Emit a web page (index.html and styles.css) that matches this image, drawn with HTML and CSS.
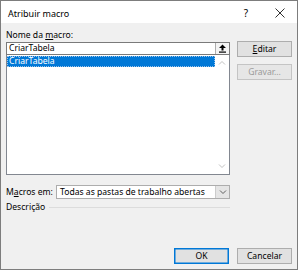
FILE: index.html
```html
<!DOCTYPE html>
<html lang="pt">
<head>
<meta charset="utf-8">
<title>Atribuir macro</title>
<link rel="stylesheet" href="styles.css">
</head>
<body>
<div class="dialog">
  <div class="titlebar">
    <span class="title">Atribuir macro</span>
    <span class="help">?</span>
    <svg class="close" width="10" height="10" viewBox="0 0 10 10"><path d="M0.5 0.5 L9.5 9.5 M9.5 0.5 L0.5 9.5" stroke="#1a1a1a" stroke-width="0.9" fill="none"/></svg>
  </div>
  <div class="content">
    <div class="main">
      <div class="leftcol">
        <div class="label">Nome da <u>m</u>acro:</div>
        <div class="namebox">
          <span class="nametext">CriarTabela</span>
          <span class="refbtn"><svg width="9" height="9" viewBox="0 0 9 9"><path d="M4.5 0.5 L8 4 L5.5 4 L5.5 6.5 L3.5 6.5 L3.5 4 L1 4 Z" fill="#000"/><rect x="1" y="7.5" width="7" height="1.2" fill="#000"/></svg></span>
        </div>
        <div class="listbox">
          <div class="items">
            <div class="item selected">CriarTabela</div>
          </div>
          <div class="scrollbar">
            <svg width="8" height="6" viewBox="0 0 8 6"><path d="M1 4.5 L4 1.5 L7 4.5" stroke="#c2c2c2" stroke-width="1" fill="none"/></svg>
            <svg width="8" height="6" viewBox="0 0 8 6"><path d="M1 1.5 L4 4.5 L7 1.5" stroke="#c2c2c2" stroke-width="1" fill="none"/></svg>
          </div>
        </div>
      </div>
      <div class="rightcol">
        <div class="btn"><u>E</u>ditar</div>
        <div class="btn disabled">Gravar...</div>
      </div>
    </div>
    <div class="macrosrow">
      <span class="label">M<u>a</u>cros em:</span>
      <div class="combo">
        <span class="combotext">Todas as pastas de trabalho abertas</span>
        <span class="dropbtn"><svg width="8" height="6" viewBox="0 0 8 6"><path d="M1 1.5 L4 4.5 L7 1.5" stroke="#606060" stroke-width="1" fill="none"/></svg></span>
      </div>
    </div>
    <div class="descrow">
      <span class="label">Descrição</span>
      <span class="sep"></span>
    </div>
    <div class="footer">
      <div class="btn default">OK</div>
      <div class="btn">Cancelar</div>
    </div>
  </div>
</div>
</body>
</html>
```
FILE: styles.css
```css
html, body {
  margin: 0;
  padding: 0;
  background: #ffffff;
}
body {
  width: 300px;
  height: 272px;
  font-family: "Noto Sans", "DejaVu Sans", sans-serif;
  font-size: 8.6px;
  color: #000;
}
.dialog {
  width: 296px;
  height: 268px;
  border: 1px solid #7d7d7d;
  background: #f0f0f0;
  display: flex;
  flex-direction: column;
}
.titlebar {
  height: 22px;
  background: #ffffff;
  display: flex;
  align-items: center;
  padding-left: 7px;
  box-sizing: border-box;
  flex: none;
}
.title {
  font-size: 9px;
  flex: 1;
  padding-top: 3px;
}
.help {
  font-size: 10px;
  margin-right: 27px;
  padding-top: 2px;
}
.close {
  margin-right: 12px;
  margin-top: 2px;
}
.content {
  flex: 1;
  display: flex;
  flex-direction: column;
  padding: 6px 5px 5px 5px;
}
.main {
  display: flex;
  gap: 7px;
}
.leftcol {
  width: 224px;
  display: flex;
  flex-direction: column;
}
.label {
  line-height: 13px;
  height: 13px;
}
u {
  text-decoration-thickness: 1px;
  text-underline-offset: 1px;
}
.namebox {
  height: 13px;
  box-sizing: border-box;
  border: 1px solid #7a7a7a;
  background: #fff;
  display: flex;
  align-items: center;
}
.nametext {
  flex: 1;
  padding-left: 2px;
  line-height: 11px;
}
.refbtn {
  width: 14px;
  height: 11px;
  box-sizing: border-box;
  border-left: 1px solid #adadad;
  background: #f4f4f4;
  display: flex;
  align-items: center;
  justify-content: center;
}
.listbox {
  height: 120px;
  box-sizing: border-box;
  border: 1px solid #828790;
  border-top: none;
  background: #fff;
  display: flex;
}
.items {
  flex: 1;
  padding-top: 1px;
}
.item {
  height: 11px;
  line-height: 11px;
  padding-left: 2px;
  box-sizing: border-box;
}
.item.selected {
  background: #0078d7;
  color: #fff;
  outline: 1px dotted #9ac3ea;
  outline-offset: -1px;
}
.scrollbar {
  width: 14px;
  display: flex;
  flex-direction: column;
  justify-content: space-between;
  align-items: center;
  padding: 5px 0 5px 0;
  background: #ffffff;
}
.rightcol {
  width: 55px;
  display: flex;
  flex-direction: column;
  gap: 7px;
  padding-top: 12px;
}
.btn {
  width: 55px;
  height: 16px;
  box-sizing: border-box;
  border: 1px solid #adadad;
  background: #e1e1e1;
  display: flex;
  align-items: center;
  justify-content: center;
  line-height: 14px;
}
.btn.disabled {
  color: #9a9a9a;
  border-color: #c4c4c4;
  background: #e6e6e6;
}
.btn.default {
  border: 1px solid #0078d7;
  box-shadow: inset 0 0 0 0.5px #0078d7;
}
.macrosrow {
  display: flex;
  align-items: center;
  margin-top: 10px;
}
.macrosrow .label {
  width: 50px;
}
.combo {
  width: 174px;
  height: 14px;
  box-sizing: border-box;
  border: 1px solid #adadad;
  background: #fff;
  display: flex;
  align-items: center;
}
.combotext {
  flex: 1;
  padding-left: 3px;
  line-height: 12px;
}
.dropbtn {
  width: 13px;
  height: 12px;
  background: #e5e5e5;
  border-left: 1px solid #cccccc;
  display: flex;
  align-items: center;
  justify-content: center;
}
.descrow {
  display: flex;
  align-items: center;
  width: 224px;
  margin-top: 2px;
  gap: 4px;
}
.sep {
  flex: 1;
  height: 1px;
  background: #dcdcdc;
  margin-top: -1px;
}
.footer {
  margin-top: auto;
  display: flex;
  justify-content: flex-end;
  gap: 8px;
}
```
